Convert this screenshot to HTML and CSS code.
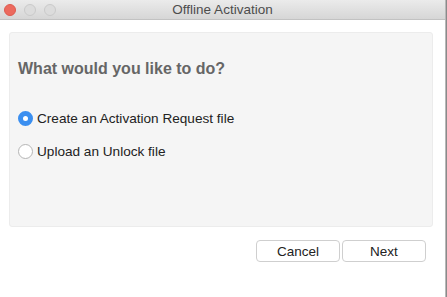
FILE: index.html
```html
<!DOCTYPE html>
<html lang="en">

<head>
    <meta charset="UTF-8">
    <meta name="viewport" content="width=device-width, initial-scale=1.0">
    <title>Offline Activation</title>
    <link rel="stylesheet" href="styles.css">
</head>

<body>
    <div class="window">
        <div class="titlebar">
            <div class="lights">
                <span class="light close"></span>
                <span class="light"></span>
                <span class="light"></span>
            </div>
            <div class="title">Offline Activation</div>
        </div>

        <div class="content">
            <div class="panel">
                <h2>What would you like to do?</h2>
                <label class="option">
                    <input type="radio" name="mode" value="request" checked>
                    <span class="radio"></span>
                    Create an Activation Request file
                </label>
                <label class="option">
                    <input type="radio" name="mode" value="unlock">
                    <span class="radio"></span>
                    Upload an Unlock file
                </label>
            </div>

            <div class="actions">
                <button type="button">Cancel</button>
                <button type="button">Next</button>
            </div>
        </div>
    </div>
</body>

</html>
```

FILE: styles.css
```css
body {
    margin: 0;
    font-family: "Liberation Sans", Arial, sans-serif;
    background: #8a8a8a;
    width: 447px;
    height: 297px;
    overflow: hidden;
}

.window {
    width: 445px;
    height: 297px;
    background: #fff;
    border-right: 1px solid #b8b8b8;
    display: flex;
    flex-direction: column;
}

.titlebar {
    height: 19px;
    background: linear-gradient(#ebebeb, #d6d6d6);
    border-bottom: 1px solid #c2c2c2;
    display: flex;
    align-items: center;
    position: relative;
}

.lights {
    display: flex;
    gap: 8px;
    padding-left: 4px;
}

.light {
    width: 12px;
    height: 12px;
    box-sizing: border-box;
    border-radius: 50%;
    background: #dcdcdc;
    border: 1px solid #cacaca;
}

.light.close {
    background: #ec6a5e;
    border-color: #de5a4f;
}

.title {
    position: absolute;
    left: 0;
    right: 0;
    text-align: center;
    font-size: 13.5px;
    color: #4d4d4d;
}

.content {
    padding: 12px 12px 0 9px;
}

.panel {
    height: 195px;
    box-sizing: border-box;
    background: #f5f5f5;
    border: 1px solid #ececec;
    border-radius: 3px;
    padding: 27px 10px 0 8px;
}

.panel h2 {
    margin: 0 0 32px;
    font-size: 16px;
    color: #666;
}

.option {
    display: flex;
    align-items: center;
    gap: 4px;
    font-size: 13.6px;
    color: #222;
    height: 17px;
    margin-bottom: 16px;
}

.option input {
    display: none;
}

.radio {
    width: 15px;
    height: 15px;
    box-sizing: border-box;
    border-radius: 50%;
    background: #fff;
    border: 1px solid #b5b5b5;
}

.option input:checked + .radio {
    border: 5px solid #3b8ff0;
    background: #fff;
}

.actions {
    display: flex;
    justify-content: flex-end;
    gap: 2px;
    padding: 13px 7px 0 0;
}

.actions button {
    width: 84px;
    height: 22px;
    background: #fff;
    border: 1px solid #cfcfcf;
    border-radius: 4px;
    font-family: "Liberation Sans", Arial, sans-serif;
    font-size: 13.5px;
    color: #222;
    padding: 0;
}
```
